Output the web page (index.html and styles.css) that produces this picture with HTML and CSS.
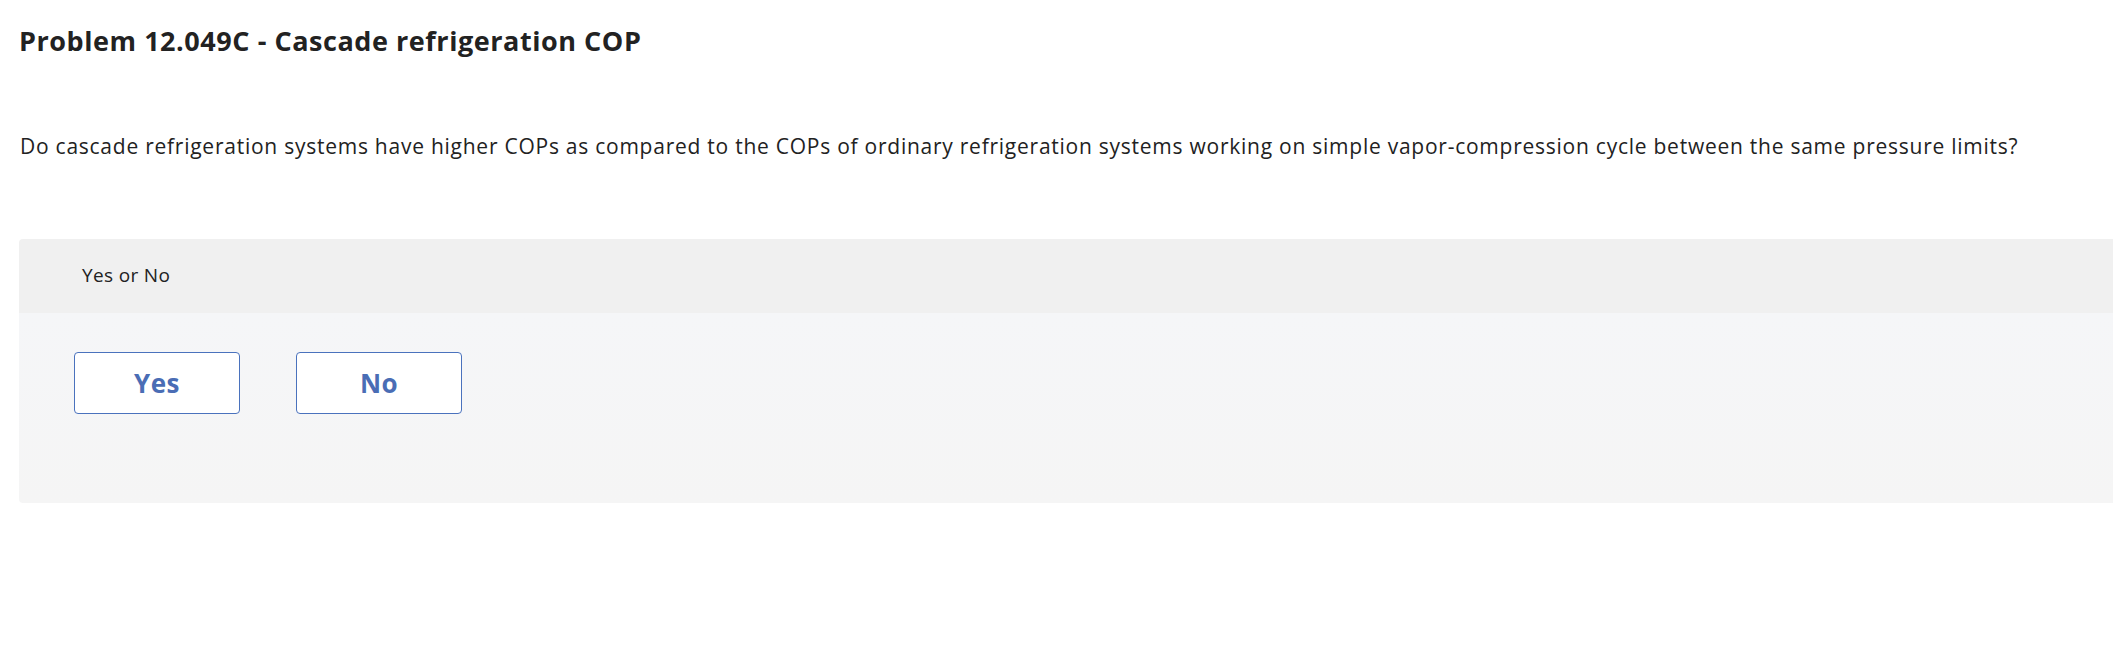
FILE: index.html
```html
<!DOCTYPE html>
<html lang="en">
<head>
    <meta charset="UTF-8">
    <meta name="viewport" content="width=device-width, initial-scale=1.0">
    <title>Problem 12.049C - Cascade refrigeration COP</title>
    <link rel="stylesheet" href="styles.css">
</head>
<body>

    <div class="page">
        <h1 class="problem-title">Problem 12.049C - Cascade refrigeration COP</h1>

        <!-- Question text -->
        <p class="question">Do cascade refrigeration systems have higher COPs as compared to the COPs of ordinary refrigeration systems working on simple vapor-compression cycle between the same pressure limits?</p>

        <!-- Answer panel -->
        <div class="answer-panel">
            <div class="answer-header">Yes or No</div>
            <div class="answer-body">
                <button class="choice">Yes</button>
                <button class="choice">No</button>
            </div>
        </div>
    </div>

</body>
</html>
```

FILE: styles.css
```css
body {
    margin: 0;
    font-family: "Open Sans", Lato, Arial, sans-serif;
    font-variant-ligatures: none;
    color: #222;
    background: #fff;
}
.page {
    padding: 24px 0 0 19px;
}
.problem-title {
    margin: 0;
    font-size: 27px;
    font-weight: 700;
    line-height: 34px;
    letter-spacing: 0.55px;
}
.question {
    margin: 75px 0 0 1px;
    font-size: 21px;
    line-height: 26px;
    letter-spacing: 0.75px;
    white-space: nowrap;
}
.answer-panel {
    margin-top: 80px;
    border-radius: 4px 0 0 4px;
    overflow: hidden;
}
.answer-header {
    height: 74px;
    box-sizing: border-box;
    padding: 24px 0 0 63px;
    background: #f0f0f0;
    font-size: 19px;
    line-height: 24px;
    letter-spacing: 0.35px;
}
.answer-body {
    height: 190px;
    box-sizing: border-box;
    padding: 39px 0 0 55px;
    background: linear-gradient(#f5f6f8, #f5f5f5);
    display: flex;
    gap: 56px;
    align-items: flex-start;
}
.choice {
    width: 166px;
    height: 62px;
    background: #fff;
    border: 1px solid #4a72bd;
    border-radius: 4px;
    color: #4a6db5;
    font-family: inherit;
    font-size: 26px;
    font-weight: 700;
    letter-spacing: 0.5px;
    cursor: pointer;
}
```
